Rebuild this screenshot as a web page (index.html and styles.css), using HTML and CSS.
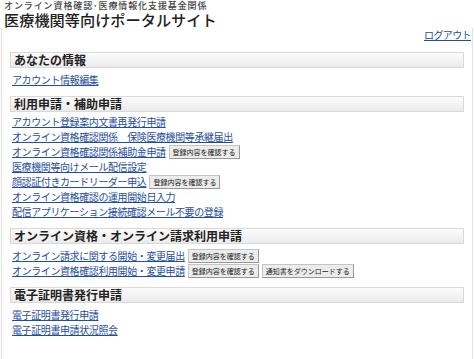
FILE: index.html
```html
<!DOCTYPE html>
<html lang="ja">
<head>
    <meta charset="UTF-8">
    <meta name="viewport" content="width=device-width, initial-scale=1.0">
    <title>医療機関等向けポータルサイト</title>
    <link rel="stylesheet" href="styles.css">
</head>
<body>
    <div class="header">
        <p class="subtitle">オンライン資格確認･医療情報化支援基金関係</p>
        <h1>医療機関等向けポータルサイト</h1>
    </div>

    <div class="container">
        <div class="topbar">
            <a href="#">ログアウト</a>
        </div>

        <div class="content">
            <h2>あなたの情報</h2>
            <ul class="links first">
                <li><a href="#">アカウント情報編集</a></li>
            </ul>

            <h2>利用申請・補助申請</h2>
            <ul class="links">
                <li><a href="#">アカウント登録案内文書再発行申請</a></li>
                <li><a href="#">オンライン資格確認関係　保険医療機関等承継届出</a></li>
                <li><a href="#">オンライン資格確認関係補助金申請</a><button class="btn">登録内容を確認する</button></li>
                <li><a href="#">医療機関等向けメール配信設定</a></li>
                <li><a href="#">顔認証付きカードリーダー申込</a><button class="btn">登録内容を確認する</button></li>
                <li><a href="#">オンライン資格確認の運用開始日入力</a></li>
                <li><a href="#">配信アプリケーション接続確認メール不要の登録</a></li>
            </ul>

            <h2>オンライン資格・オンライン請求利用申請</h2>
            <ul class="links wide">
                <li><a href="#">オンライン請求に関する開始・変更届出</a><button class="btn">登録内容を確認する</button></li>
                <li><a href="#">オンライン資格確認利用開始・変更申請</a><button class="btn">登録内容を確認する</button><button class="btn">通知書をダウンロードする</button></li>
            </ul>

            <h2>電子証明書発行申請</h2>
            <ul class="links wide">
                <li><a href="#">電子証明書発行申請</a></li>
                <li><a href="#">電子証明書申請状況照会</a></li>
            </ul>
        </div>
    </div>
</body>
</html>
```
FILE: styles.css
```css
body{
    margin: 0;
    font-family: "Noto Sans CJK JP", "Noto Sans", sans-serif;
    color: #222;
    background-color: #fff;
}

.header{
    padding: 0 4px;
}

.subtitle{
    margin: 0;
    font-size: 9px;
    line-height: 11px;
    font-weight: 500;
    letter-spacing: 0.9px;
    color: #444;
}

h1{
    margin: 0;
    font-size: 15.2px;
    line-height: 17px;
    font-weight: 500;
    color: #222;
}

.container{
    margin: 0 1px;
    border-left: 1px solid #e2e2e2;
    border-right: 1px solid #e2e2e2;
    padding-bottom: 30px;
}

.topbar{
    text-align: right;
    padding-right: 1px;
    font-size: 10px;
    line-height: 14px;
    letter-spacing: -0.6px;
}

a{
    color: #1f4ea0;
}

.content{
    padding: 0 8px;
}

h2{
    margin: 9px 0 0;
    height: 14px;
    border: 1px solid #d9d9d9;
    background: linear-gradient(#fbfbfb, #ebebeb);
    padding-left: 3px;
    font-size: 12px;
    line-height: 14px;
    color: #222;
}

.content h2:first-child{
    margin-top: 10px;
}

.links{
    list-style: none;
    margin: 2px 0 0;
    padding: 0 2px;
    font-size: 10px;
    line-height: 15px;
    letter-spacing: -0.4px;
}

.links.first{
    margin-top: 4px;
}

.links.wide{
    margin-top: 4px;
}

.links li{
    display: flex;
    align-items: center;
    height: 15px;
}

.btn{
    margin-left: 3px;
    height: 14px;
    padding: 0 3px;
    font-family: inherit;
    font-size: 7px;
    line-height: 12px;
    letter-spacing: 0;
    color: #222;
    background-color: #ececec;
    border: 1px solid #c4c4c4;
    border-right-color: #999;
    border-bottom-color: #999;
}
```
